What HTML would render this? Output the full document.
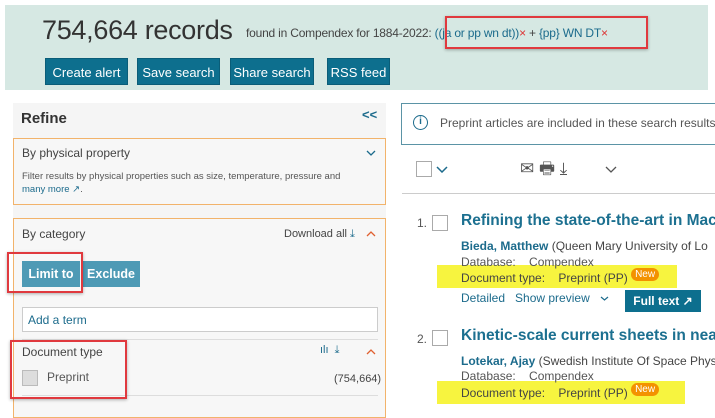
<!DOCTYPE html>
<html><head><meta charset="utf-8"><style>
*{box-sizing:border-box;margin:0;padding:0}
body{width:715px;height:406px;overflow:hidden;background:#fff;font-family:"Liberation Sans",sans-serif;position:relative;color:#333}
.a{position:absolute;white-space:nowrap}
.btn{position:absolute;top:58px;height:27px;background:#0d6f8e;color:#fff;font-size:13px;line-height:27px;text-align:center;border:1px solid #0a5d78}
.red{position:absolute;border:2px solid #e0393e;box-shadow:0 1px 3px rgba(0,0,0,.3)}
.link{color:#1c6b8c}
.hl{position:absolute;background:#f7f43f}
.cb{position:absolute;width:16px;height:16px;border:1px solid #aaa;background:#fff}
.new{display:inline-block;background:#f39200;color:#fff;font-size:10px;border-radius:8px;padding:0 4px;line-height:13px;vertical-align:top;margin-top:-3px}
svg{position:absolute}
</style></head><body>
<div class="a" style="left:5px;top:5px;width:703px;height:85px;background:#d6e8e3"></div>
<div class="a" style="left:42px;top:15px;font-size:27px;color:#333;letter-spacing:-0.3px">754,664 records</div>
<div class="a" style="left:246px;top:26px;font-size:12px;color:#444;letter-spacing:-0.2px">found in Compendex for 1884-2022: <span class="link">((ja or pp wn dt))</span><span style="color:#d33">×</span> + <span class="link">{pp} WN DT</span><span style="color:#d33">×</span></div>
<div class="red" style="left:445px;top:16px;width:203px;height:33px"></div>
<div class="btn" style="left:45px;width:83px">Create alert</div>
<div class="btn" style="left:137px;width:83px">Save search</div>
<div class="btn" style="left:230px;width:84px">Share search</div>
<div class="btn" style="left:327px;width:63px">RSS feed</div>

<div class="a" style="left:13px;top:103px;width:373px;height:303px;background:#f5f5f5"></div>
<div class="a" style="left:21px;top:110px;font-size:15px;font-weight:bold;color:#333">Refine</div>
<div class="a" style="left:362px;top:107px;font-size:13px;font-weight:bold;color:#1c6b8c">&lt;&lt;</div>
<div class="a" style="left:13px;top:138px;width:373px;height:67px;border:1px solid #f2b36b;background:#f7f7f7"></div>
<div class="a" style="left:22px;top:146px;font-size:12px;color:#444">By physical property</div>
<svg style="left:366px;top:150px" width="10" height="6"><path d="M1 1L5 5L9 1" stroke="#1c6b8c" fill="none" stroke-width="1.3"/></svg>
<div class="a" style="left:22px;top:170px;font-size:9.5px;color:#555;line-height:13px">Filter results by physical properties such as size, temperature, pressure and<br><span class="link">many more ↗</span>.</div>

<div class="a" style="left:13px;top:218px;width:373px;height:200px;border:1px solid #f2b36b;background:#f7f7f7"></div>
<div class="a" style="left:22px;top:227px;font-size:12px;color:#444">By category</div>
<div class="a" style="left:284px;top:228px;font-size:11px;color:#444">Download all <span class="link">⤓</span></div>
<svg style="left:366px;top:231px" width="10" height="6"><path d="M1 5L5 1L9 5" stroke="#e06030" fill="none" stroke-width="1.3"/></svg>
<div class="a" style="left:22px;top:261px;width:58px;height:26px;background:#4e9ab5;color:#fff;font-size:12.5px;font-weight:bold;line-height:26px;text-align:center">Limit to</div>
<div class="a" style="left:82px;top:261px;width:58px;height:26px;background:#4e9ab5;color:#fff;font-size:12.5px;font-weight:bold;line-height:26px;text-align:center">Exclude</div>
<div class="red" style="left:7px;top:252px;width:76px;height:41px"></div>
<div class="a" style="left:22px;top:307px;width:356px;height:25px;background:#fff;border:1px solid #ccc;font-size:12px;color:#1c6b8c;padding:5px 5px">Add a term</div>
<div class="a" style="left:22px;top:339px;width:356px;border-top:1px solid #ddd"></div>
<div class="a" style="left:22px;top:345px;font-size:12px;color:#444">Document type</div>
<div class="a" style="left:320px;top:344px;font-size:11px;color:#1c6b8c">ılı &nbsp;⤓</div>
<svg style="left:366px;top:349px" width="10" height="6"><path d="M1 5L5 1L9 5" stroke="#e06030" fill="none" stroke-width="1.3"/></svg>
<div class="a" style="left:22px;top:370px;width:16px;height:16px;border:1px solid #bbb;background:#ddd"></div>
<div class="a" style="left:47px;top:370px;font-size:12px;color:#555">Preprint</div>
<div class="a" style="left:334px;top:373px;font-size:11px;color:#444">(754,664)</div>
<div class="a" style="left:22px;top:395px;width:356px;border-top:1px solid #ddd"></div>
<div class="red" style="left:10px;top:340px;width:117px;height:59px"></div>

<div class="a" style="left:401px;top:103px;width:320px;height:42px;border:1px solid #5b94a6;background:#fff"></div>
<div class="a" style="left:413px;top:115px;width:15px;height:15px;border:1.5px solid #1c6b8c;border-radius:50%;font-size:10px;color:#1c6b8c;text-align:center;line-height:12px;font-weight:bold">i</div>
<div class="a" style="left:440px;top:116px;font-size:12px;color:#555">Preprint articles are included in these search results</div>
<div class="cb" style="left:416px;top:161px"></div>
<svg style="left:436px;top:166px" width="12" height="7"><path d="M1 1L6 6L11 1" stroke="#1c6b8c" fill="none" stroke-width="1.5"/></svg>
<div class="a" style="left:520px;top:156px;font-size:17px;color:#555">✉ 🖶 ⤓</div>
<svg style="left:605px;top:166px" width="12" height="7"><path d="M1 1L6 6L11 1" stroke="#555" fill="none" stroke-width="1.3"/></svg>
<div class="a" style="left:402px;top:193px;width:313px;border-top:1px solid #ccc"></div>

<div class="a" style="left:417px;top:216px;font-size:12px;color:#555">1.</div>
<div class="cb" style="left:432px;top:215px"></div>
<div class="a" style="left:461px;top:212px;font-size:15.5px;font-weight:bold;color:#1c7090">Refining the state-of-the-art in Mac</div>
<div class="a" style="left:461px;top:239px;font-size:12px;color:#444"><b class="link">Bieda, Matthew</b> (Queen Mary University of Lo</div>
<div class="hl" style="left:437px;top:265px;width:240px;height:23px"></div>
<div class="a" style="left:461px;top:255px;font-size:12px;color:#555">Database: &nbsp;&nbsp;&nbsp;Compendex</div>
<div class="a" style="left:461px;top:271px;font-size:12px;color:#444">Document type: &nbsp;&nbsp;&nbsp;Preprint (PP) <span class="new">New</span></div>
<div class="a" style="left:461px;top:291px;font-size:12px;color:#1c6b8c">Detailed &nbsp;&nbsp;Show preview</div>
<svg style="left:600px;top:296px" width="9" height="5"><path d="M1 1L4.5 4L8 1" stroke="#1c6b8c" fill="none" stroke-width="1.2"/></svg>
<div class="a" style="left:625px;top:290px;width:76px;height:22px;background:#0d6f8e;color:#fff;font-size:12px;font-weight:bold;line-height:22px;text-align:center">Full text ↗</div>

<div class="a" style="left:417px;top:332px;font-size:12px;color:#555">2.</div>
<div class="cb" style="left:432px;top:330px"></div>
<div class="a" style="left:461px;top:327px;font-size:15.5px;font-weight:bold;color:#1c7090">Kinetic-scale current sheets in near-</div>
<div class="a" style="left:461px;top:354px;font-size:12px;color:#444"><b class="link">Lotekar, Ajay</b> (Swedish Institute Of Space Phys</div>
<div class="hl" style="left:437px;top:381px;width:248px;height:23px"></div>
<div class="a" style="left:461px;top:369px;font-size:12px;color:#555">Database: &nbsp;&nbsp;&nbsp;Compendex</div>
<div class="a" style="left:461px;top:386px;font-size:12px;color:#444">Document type: &nbsp;&nbsp;&nbsp;Preprint (PP) <span class="new">New</span></div>
</body></html>
